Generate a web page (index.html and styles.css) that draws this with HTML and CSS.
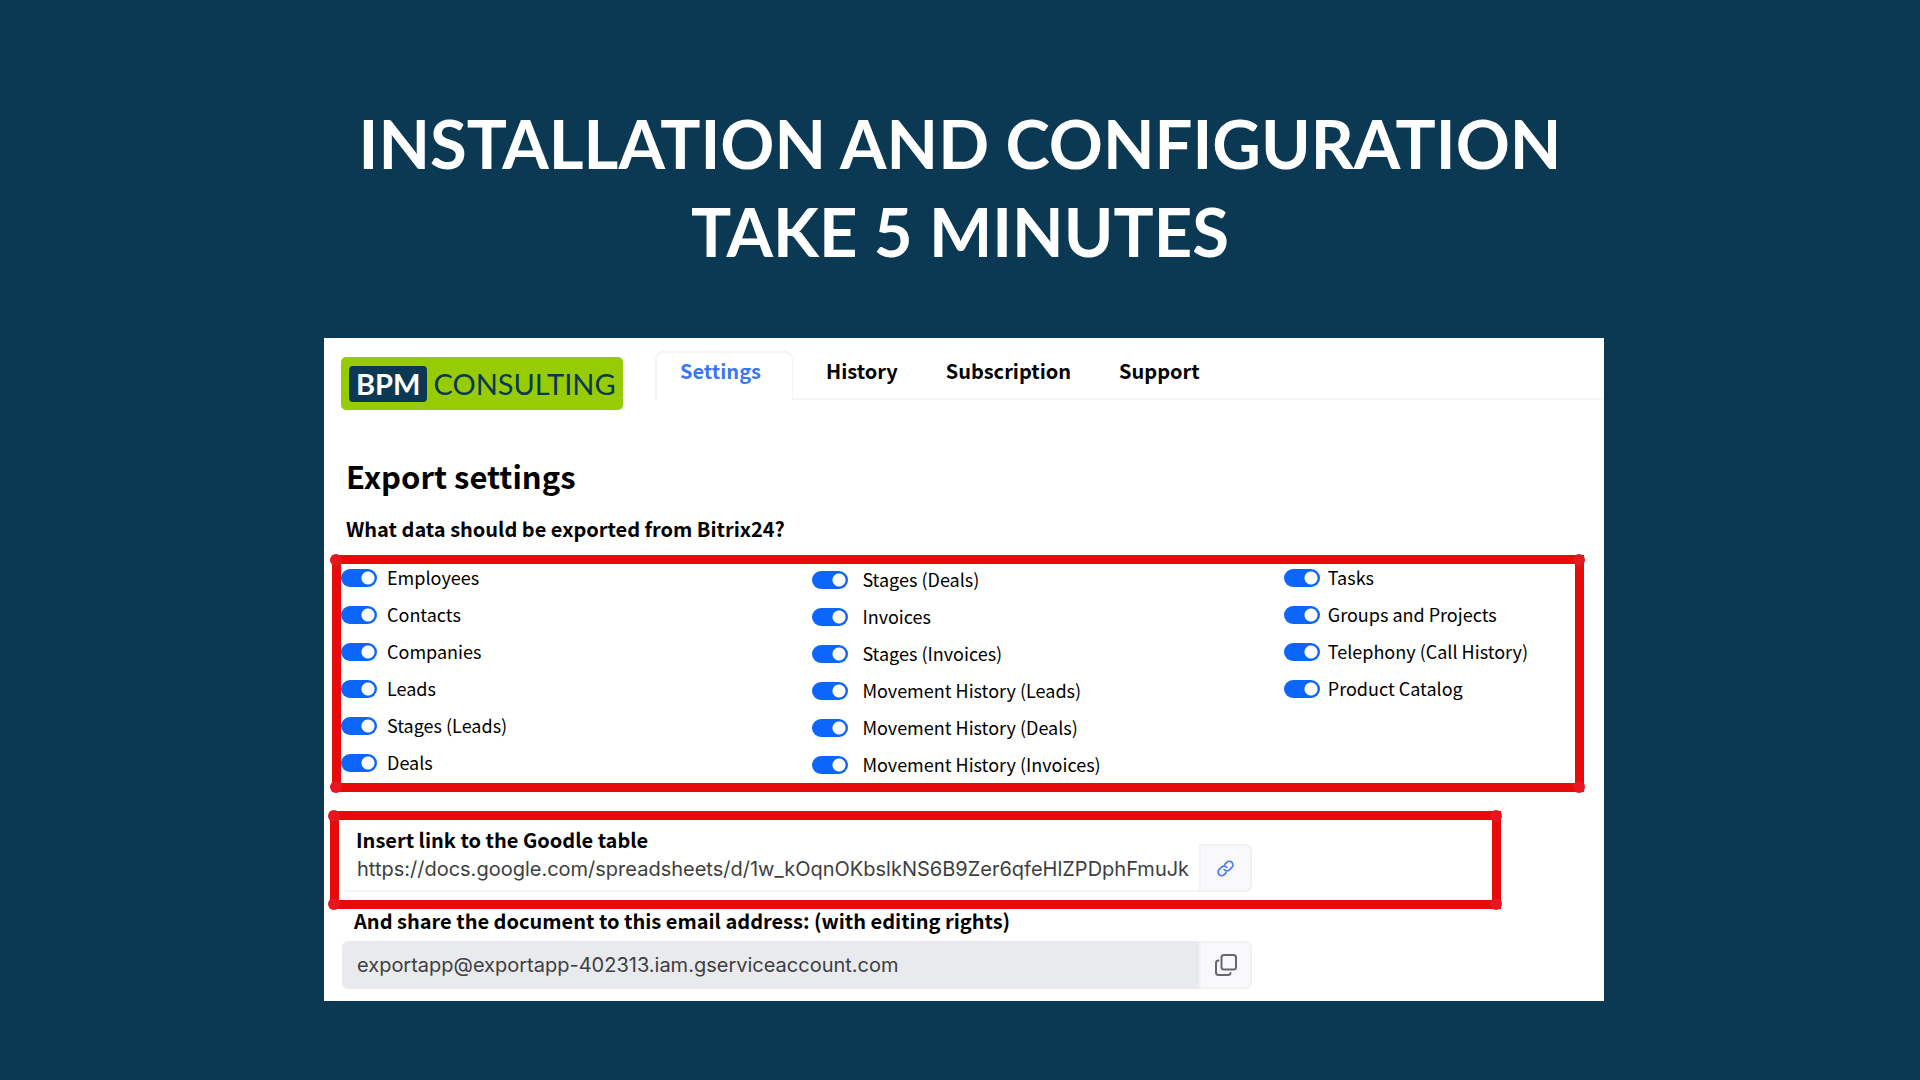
FILE: index.html
```html
<!DOCTYPE html>
<html lang="en">
<head>
<meta charset="utf-8">
<meta name="viewport" content="width=device-width, initial-scale=1">
<title>Installation and configuration</title>
<link rel="stylesheet" href="styles.css">
</head>
<body>
<main class="slide">
  <h1 class="headline">INSTALLATION AND CONFIGURATION<br>TAKE 5 MINUTES</h1>
  <section class="card">
    <header class="topbar">
      <div class="logo"><span class="logo-mark">BPM</span><span class="logo-name">CONSULTING</span></div>
      <nav class="tabs">
        <a class="tab tab-active" href="#settings">Settings</a>
        <div class="tab-rest">
          <a class="tab" href="#history">History</a>
          <a class="tab" href="#subscription">Subscription</a>
          <a class="tab" href="#support">Support</a>
        </div>
      </nav>
    </header>
    <h2 class="title">Export settings</h2>
    <h3 class="question">What data should be exported from Bitrix24?</h3>
    <div class="marked marked-options">
      <i class="dot dot-tl"></i><i class="dot dot-tr"></i><i class="dot dot-bl"></i><i class="dot dot-br"></i>
      <div class="column">
        <label class="option"><input class="switch" type="checkbox" checked>Employees</label>
        <label class="option"><input class="switch" type="checkbox" checked>Contacts</label>
        <label class="option"><input class="switch" type="checkbox" checked>Companies</label>
        <label class="option"><input class="switch" type="checkbox" checked>Leads</label>
        <label class="option"><input class="switch" type="checkbox" checked>Stages (Leads)</label>
        <label class="option"><input class="switch" type="checkbox" checked>Deals</label>
      </div>
      <div class="column column-wide">
        <label class="option"><input class="switch" type="checkbox" checked>Stages (Deals)</label>
        <label class="option"><input class="switch" type="checkbox" checked>Invoices</label>
        <label class="option"><input class="switch" type="checkbox" checked>Stages (Invoices)</label>
        <label class="option"><input class="switch" type="checkbox" checked>Movement History (Leads)</label>
        <label class="option"><input class="switch" type="checkbox" checked>Movement History (Deals)</label>
        <label class="option"><input class="switch" type="checkbox" checked>Movement History (Invoices)</label>
      </div>
      <div class="column column-tight">
        <label class="option"><input class="switch" type="checkbox" checked>Tasks</label>
        <label class="option"><input class="switch" type="checkbox" checked>Groups and Projects</label>
        <label class="option"><input class="switch" type="checkbox" checked>Telephony (Call History)</label>
        <label class="option"><input class="switch" type="checkbox" checked>Product Catalog</label>
      </div>
    </div>
    <div class="marked marked-link">
      <i class="dot dot-tl"></i><i class="dot dot-tr"></i><i class="dot dot-bl"></i><i class="dot dot-br"></i>
      <div class="link-field">
        <label class="field-label" for="sheet">Insert link to the Goodle table</label>
        <input class="link-input" id="sheet" type="text" value="https://docs.google.com/spreadsheets/d/1w_kOqnOKbslkNS6B9Zer6qfeHlZPDphFmuJk">
        <button class="field-button link-button" type="button" aria-label="Open link">
          <svg width="17" height="17" viewBox="0 0 24 24" fill="none" stroke="#4a7bf0" stroke-width="2.4" stroke-linecap="round"><path d="M10 13.5a5 5 0 0 0 7.5.5l3.500-3.500a5 5 0 0 0-7.200-7.200l-2.800 2.800"/><path d="M14 10.500a5 5 0 0 0-7.500-.5L3 13.500a5 5 0 0 0 7.200 7.200l2.800-2.800"/></svg>
        </button>
      </div>
    </div>
    <div class="email-block">
      <label class="field-label" for="email">And share the document to this email address: (with editing rights)</label>
      <div class="email-field">
        <input class="email-input" id="email" type="text" readonly value="exportapp@exportapp-402313.iam.gserviceaccount.com">
        <button class="field-button" type="button" aria-label="Copy address">
          <svg width="24" height="24" viewBox="0 0 24 24" fill="none" stroke="#66676a" stroke-width="2" stroke-linejoin="round" stroke-linecap="round"><rect x="7.500" y="2" width="14.500" height="14.500" rx="2.500"/><path d="M4.500 7.500Q2 7.500 2 10v9.500Q2 22 4.500 22H14q2.500 0 2.500-2"/></svg>
        </button>
      </div>
    </div>
  </section>
</main>
</body>
</html>
```
FILE: styles.css
```css
* { box-sizing: border-box; }

body {
  margin: 0;
  min-height: 100vh;
  background: #0b3954;
  color: #000;
  font-family: "Noto Sans CJK SC", "Lato", sans-serif;
}

.slide { padding: 99px 24px 78px 32px; }

.headline {
  margin: 0 8px 0 0;
  color: #fff;
  font: 700 67px/88px "Lato", sans-serif;
  text-align: center;
}

.card {
  width: 100%;
  max-width: 1280px;
  margin: 63px auto 0;
  padding-bottom: 12px;
  background: #fff;
}

.topbar {
  display: flex;
  align-items: flex-start;
  gap: 32px;
  padding: 13px 0 0 17px;
}

.logo {
  display: flex;
  align-items: center;
  gap: 6px;
  width: 282px;
  height: 53px;
  margin-top: 6px;
  padding-left: 8px;
  border-radius: 5px;
  background: #97cc04;
  color: #0b3954;
  font: 400 29px/36px "Lato", sans-serif;
}

.logo-mark {
  padding: 0 7px;
  border-radius: 4px;
  background: #0b3954;
  color: #fff;
  font-weight: 700;
}

.tabs {
  display: flex;
  flex: 1;
  height: 49px;
  font-size: 20px;
  font-weight: 700;
  line-height: 36px;
}

.tab { color: #000; text-decoration: none; }

.tab-active {
  width: 138px;
  padding-left: 23px;
  border: 2px solid #f5f5f6;
  border-bottom: 0;
  border-right-width: 1px;
  border-radius: 8px 8px 0 0;
  color: #3a78f2;
}

.tab-rest {
  display: flex;
  flex: 1;
  gap: 48px;
  padding: 2px 0 0 33px;
  border-bottom: 2px solid #f5f5f6;
}

.title {
  margin: 44px 0 0 22px;
  font-size: 31px;
  line-height: 44px;
}

.question {
  margin: 16px 0 0 22px;
  font-size: 20px;
  line-height: 30px;
}

.marked {
  position: relative;
  border: 9px solid #e80909;
}

.marked-options {
  display: grid;
  grid-template-columns: 471fr 471fr 291fr;
  min-height: 237px;
  margin: 11px 20px 0 8px;
}

.column {
  display: flex;
  flex-direction: column;
  align-items: flex-start;
  gap: 10px;
}

.option {
  display: flex;
  align-items: center;
  gap: 10px;
  font-size: 18px;
  line-height: 27px;
}

.column-wide { padding-top: 2px; }
.column-wide .option { gap: 14px; }
.column-tight .option { gap: 8px; }

.switch {
  appearance: none;
  width: 36px;
  height: 18px;
  margin: 0;
  border-radius: 9px;
  background: radial-gradient(circle at 27px 9px, #fff 6px, #0d66fb 7px);
}

.dot {
  position: absolute;
  width: 12px;
  height: 12px;
  border-radius: 50%;
  background: #e8161e;
}

.dot-tl { top: -10px; left: -11px; }
.dot-tr { top: -10px; right: -10px; }
.dot-bl { bottom: -10px; left: -11px; }
.dot-br { bottom: -10px; right: -10px; }

.marked-link {
  margin: 19px 103px 0 6px;
  padding: 8px 3px;
}

.link-field {
  display: grid;
  grid-template-columns: 1fr 53px;
  grid-template-rows: 24px 40px;
  max-width: 910px;
}

.field-label {
  padding-left: 14px;
  font-size: 20px;
  font-weight: 700;
  line-height: 24px;
}

.link-input,
.email-input {
  min-width: 0;
  margin: 0;
  padding: 0 0 0 15px;
  border: 0;
  border-radius: 6px 0 0 6px;
  background: #fff;
  color: #3d3e41;
  font: 400 20px/28px "Inter", sans-serif;
}

.link-input {
  padding-bottom: 5px;
  border-bottom: 2px solid #f3f3f4;
}

.field-button {
  display: grid;
  place-items: center;
  padding: 0;
  border: 2px solid #f2f2f4;
  border-radius: 0 6px 6px 0;
  background: #f9f9fb;
}

.link-button {
  grid-column: 2;
  grid-row: 1 / 3;
  height: 48px;
  align-self: end;
}

.email-block {
  display: grid;
  gap: 8px;
  margin: 0 24px 0 18px;
}

.email-block .field-label { padding-left: 12px; }

.email-field {
  display: grid;
  grid-template-columns: 1fr 53px;
  height: 48px;
  max-width: 910px;
}

.email-input { background: #e9eaed; }
```
